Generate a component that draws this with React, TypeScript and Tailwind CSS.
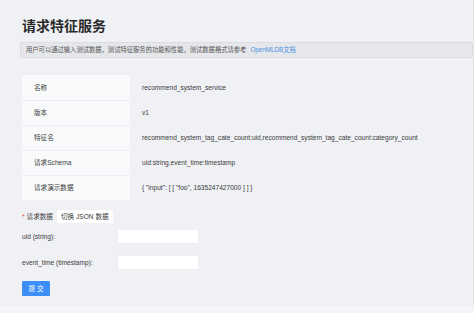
const rows: [string, string][] = [
  ['名称', 'recommend_system_service'],
  ['版本', 'v1'],
  ['特征名', 'recommend_system_tag_cate_count:uid,recommend_system_tag_cate_count:category_count'],
  ['请求Schema', 'uid:string,event_time:timestamp'],
  ['请求演示数据', '{ "input": [ [ "foo", 1635247427000 ] ] }'],
];

export default function App() {
  return (
    <div
      className="w-[474px] h-[313px] overflow-hidden bg-[#f0f1f5] text-[#333] flex flex-col"
      style={{ fontFamily: '"Liberation Sans", "Noto Sans CJK SC", sans-serif' }}
    >
      <div className="flex-1 border-r border-[#e2e3e7] pl-[22px] pt-[15px]">
        <h1 className="text-[14px] font-bold leading-[22px] text-[#2a2a2a]">请求特征服务</h1>
        <div className="mt-[5px] -ml-[2px] h-[16px] bg-[#e6e7ea] border border-[#dcdde1] rounded-[2px] flex items-center pl-[5px] text-[6.3px] text-[#555]">
          用户可以通过输入测试数据，测试特征服务的功能和性能，测试数据格式请参考
          <span className="ml-[4px] text-[#4a90e2]">OpenMLDB文档</span>
        </div>

        <div className="mt-[17px] flex flex-col text-[6.6px] text-[#3a3a3a]">
          {rows.map(([k, v], i) => (
            <div key={k} className="flex h-[25px] items-center">
              <div
                className={
                  'w-[108px] h-full flex items-center pl-[12px] bg-[#f9fafb] ' +
                  (i > 0 ? 'border-t border-[#eceef1]' : 'rounded-t-[2px]')
                }
              >
                {k}
              </div>
              <div className="pl-[12px] whitespace-nowrap">{v}</div>
            </div>
          ))}
        </div>

        <div className="mt-[10px] flex items-center text-[6.6px] text-[#3a3a3a]">
          <span className="text-[#e5484d] mr-[2px]">*</span>
          <span>请求数据</span>
          <span className="ml-[4px] bg-white px-[4px] h-[13px] flex items-center rounded-[1px]">切换 JSON 数据</span>
        </div>

        <div className="mt-[6px] flex flex-col gap-[11px] text-[6.6px] text-[#3a3a3a]">
          <div className="flex items-center h-[15px]">
            <span className="w-[95px]">uid (string):</span>
            <div className="w-[82px] h-[15px] bg-white border border-[#eceef1] rounded-[1px]" />
          </div>
          <div className="flex items-center h-[15px]">
            <span className="w-[95px]">event_time (timestamp):</span>
            <div className="w-[82px] h-[15px] bg-white border border-[#eceef1] rounded-[1px]" />
          </div>
        </div>

        <button className="mt-[11px] w-[28px] h-[15px] bg-[#3e8ef7] text-white text-[6.6px] rounded-[1px] flex items-center justify-center">
          提 交
        </button>
      </div>
      <div className="h-[8px] bg-[#f4f5f8] border-t border-[#eceef1]" />
    </div>
  );
}
